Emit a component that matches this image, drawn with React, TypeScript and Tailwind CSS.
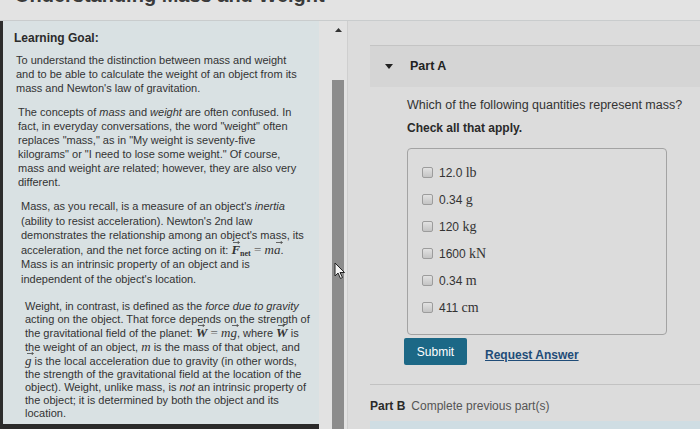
import type { ReactNode } from 'react';

const serif = "font-['Liberation_Serif','Times_New_Roman',serif]";

function Vec({ children, bold = true }: { children: ReactNode; bold?: boolean }) {
  return (
    <span className={`relative inline-block ${serif} italic ${bold ? 'font-bold' : ''} text-[13px] leading-none`}>
      <svg width="7" height="3" viewBox="0 0 7 3" className="absolute -top-[2px] left-[2px]">
        <path d="M0 1.5 H6 M4.5 0 L6.5 1.5 L4.5 3" stroke="#444" strokeWidth="0.8" fill="none" />
      </svg>
      {children}
    </span>
  );
}

function MathVar({ children }: { children: ReactNode }) {
  return <span className={`${serif} italic text-[13px] leading-none`}>{children}</span>;
}

const choices: [string, string][] = [
  ['12.0', 'lb'],
  ['0.34', 'g'],
  ['120', 'kg'],
  ['1600', 'kN'],
  ['0.34', 'm'],
  ['411', 'cm'],
];

function Checkbox() {
  return (
    <span className="h-[11px] w-[11px] shrink-0 rounded-[2px] border border-[#9c9c9c] bg-gradient-to-b from-[#e2e2e2] to-[#c4c4c4]" />
  );
}

export default function App() {
  return (
    <div className="flex h-[429px] w-[700px] flex-col overflow-hidden bg-[#dcdcdc] font-['Liberation_Sans',Arial,sans-serif] text-[#2f2f2f]">
      <header className="h-[21px] shrink-0 overflow-hidden border-b border-[#c9cccd] bg-[#e3e3e3] pl-[15px]">
        <div className="-mt-[17px] text-[20px] font-bold leading-[24px] text-[#3a3a3a]">
          Understanding Mass and Weight
        </div>
      </header>

      <div className="flex min-h-0 flex-1">
        {/* left reading panel */}
        <div className="flex w-[319px] shrink-0 flex-col border-l-[3px] border-[#2c2c2c] bg-[#d9e1e3]">
          <div className="flex-1 overflow-hidden whitespace-nowrap pl-[11px] pt-[9px] text-[11px] text-[#333]">
            <h2 className="text-[12px] font-bold leading-[16px] text-[#2b2b2b]">Learning Goal:</h2>
            <p className="ml-[2px] mt-[7px] leading-[14px]">
              To understand the distinction between mass and weight
              <br />
              and to be able to calculate the weight of an object from its
              <br />
              mass and Newton's law of gravitation.
            </p>
            <p className="ml-[4px] mt-[10px] leading-[14px]">
              The concepts of <i>mass</i> and <i>weight</i> are often confused. In
              <br />
              fact, in everyday conversations, the word "weight" often
              <br />
              replaces "mass," as in "My weight is seventy-five
              <br />
              kilograms" or "I need to lose some weight." Of course,
              <br />
              mass and weight <i>are</i> related; however, they are also very
              <br />
              different.
            </p>
            <p className="ml-[7px] mt-[10px] leading-[14.6px]">
              Mass, as you recall, is a measure of an object's <i>inertia</i>
              <br />
              (ability to resist acceleration). Newton's 2nd law
              <br />
              demonstrates the relationship among an object's mass, its
              <br />
              acceleration, and the net force acting on it:{' '}
              <Vec>F</Vec>
              <sub className={`${serif} text-[8px] font-bold leading-none`}>net</sub>
              <span className={`${serif} text-[13px] leading-none text-[#666]`}> = </span>
              <MathVar>m</MathVar>
              <Vec bold={false}>a</Vec>.
              <br />
              Mass is an intrinsic property of an object and is
              <br />
              independent of the object's location.
            </p>
            <p className="ml-[11px] mt-[13px] leading-[13px]">
              Weight, in contrast, is defined as the <i>force due to gravity</i>
              <br />
              acting on the object. That force depends on the strength of
              <br />
              the gravitational field of the planet: <Vec>W</Vec>
              <span className={`${serif} text-[13px] leading-none text-[#666]`}> = </span>
              <MathVar>m</MathVar>
              <Vec bold={false}>g</Vec>, where <Vec>W</Vec> is
              <br />
              the weight of an object, <MathVar>m</MathVar> is the mass of that object, and
              <br />
              <Vec bold={false}>g</Vec> is the local acceleration due to gravity (in other words,
              <br />
              the strength of the gravitational field at the location of the
              <br />
              object). Weight, unlike mass, is <i>not</i> an intrinsic property of
              <br />
              the object; it is determined by both the object and its
              <br />
              location.
            </p>
          </div>
          <div className="h-[5px] shrink-0 bg-[#2a2a2a]" />
        </div>

        {/* scrollbar */}
        <div className="relative flex w-[28px] shrink-0 bg-[#e2e2e2]">
          <div className="ml-[13px] flex w-[12px] flex-col items-center">
            <svg width="7" height="4" viewBox="0 0 7 4" className="mt-[7px]">
              <path d="M0 4 L3.5 0 L7 4 Z" fill="#333" />
            </svg>
            <div className="mt-[48px] w-full flex-1 bg-[#8c8c8c]" />
          </div>
          <svg
            width="12"
            height="18"
            viewBox="0 0 12 18"
            className="absolute left-[15px] top-[241px]"
          >
            <path d="M1 1 L1 14 L4 11 L6.5 16.5 L8.5 15.5 L6 10.5 L10.5 10.5 Z" fill="#f4f4f4" stroke="#222" strokeWidth="1" />
          </svg>
        </div>

        {/* right question panel */}
        <div className="flex min-w-0 flex-1 flex-col border-l border-[#cfcfcf] pl-[22px] pt-[24px] text-[12px]">
          <div className="flex h-[43px] items-center border-t border-[#c4c4c4] bg-[#d5d5d5] pl-[15px]">
            <svg width="8" height="5" viewBox="0 0 8 5">
              <path d="M0 0 L8 0 L4 5 Z" fill="#222" />
            </svg>
            <span className="ml-[17px] text-[12.5px] font-bold text-[#222]">Part A</span>
          </div>

          <div className="pl-[37px]">
            <p className="mt-[11px] text-[12.5px] leading-[14px] text-[#333]">
              Which of the following quantities represent mass?
            </p>
            <p className="mt-[9px] font-bold leading-[14px] text-[#2a2a2a]">Check all that apply.</p>

            <div className="mt-[13px] flex w-[260px] flex-col gap-[13px] rounded-[4px] border border-[#a3a3a3] pb-[20px] pl-[14px] pt-[16px]">
              {choices.map(([num, unit]) => (
                <label key={num + unit} className="flex h-[14px] items-center gap-[6px] text-[#333]">
                  <Checkbox />
                  <span className="text-[12px]">
                    {num} <span className={`${serif} text-[14px]`}>{unit}</span>
                  </span>
                </label>
              ))}
            </div>

            <div className="mt-[3px] flex items-end gap-[18px]">
              <button
                type="button"
                className="-ml-[3px] h-[27px] w-[63px] rounded-[2px] bg-[#1c6886] text-[12px] text-white"
              >
                Submit
              </button>
              <a className="mb-[1px] text-[12px] font-bold text-[#1f4c78] underline">Request Answer</a>
            </div>
          </div>

          <div className="mt-[19px] border-t border-[#c2c2c2]" />
          <div className="mt-[12px] flex items-center gap-[6px] text-[12px]">
            <span className="font-bold text-[#2a2a2a]">Part B</span>
            <span className="text-[#555]">Complete previous part(s)</span>
          </div>
          <div className="mt-[6px] h-[8px] bg-[#cfdde3]" />
        </div>
      </div>
    </div>
  );
}
